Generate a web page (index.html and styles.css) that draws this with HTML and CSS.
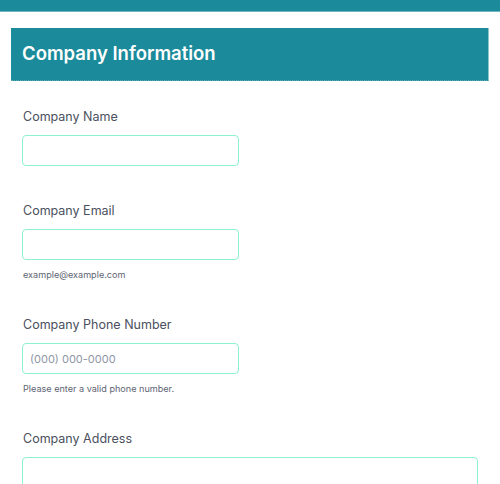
FILE: index.html
```html
<!DOCTYPE html>
<html lang="en">
<head>
    <meta charset="UTF-8">
    <meta name="viewport" content="width=device-width, initial-scale=1.0">
    <title>Company Information</title>
    <link rel="stylesheet" href="styles.css">
</head>
<body>
    <div class="top-bar"></div>

    <form class="form-card" id="companyForm">
        <div class="form-header">
            <h1>Company Information</h1>
        </div>

        <div class="field">
            <label for="companyName">Company Name</label>
            <input type="text" id="companyName" name="companyName" class="input-short">
        </div>

        <div class="field">
            <label for="companyEmail">Company Email</label>
            <input type="email" id="companyEmail" name="companyEmail" class="input-short">
            <span class="sublabel">example@example.com</span>
        </div>

        <div class="field">
            <label for="companyPhone">Company Phone Number</label>
            <input type="tel" id="companyPhone" name="companyPhone" class="input-short" placeholder="(000) 000-0000">
            <span class="sublabel">Please enter a valid phone number.</span>
        </div>

        <div class="field">
            <label for="companyAddress">Company Address</label>
            <input type="text" id="companyAddress" name="companyAddress" class="input-long">
        </div>
    </form>
</body>
</html>
```

FILE: styles.css
```css
body {
    margin: 0;
    font-family: Inter, "Noto Sans", sans-serif;
    background-color: #fff;
    color: #57647e;
}
.top-bar {
    height: 12px;
    background-color: #1b8a9b;
    border-bottom: 1px solid #6fb6c1;
    box-sizing: border-box;
}
.form-card {
    margin: 16px 11px 0;
}
.form-header {
    height: 53px;
    box-sizing: border-box;
    padding: 0 11px 3px;
    display: flex;
    align-items: center;
    background-color: #1b8a9b;
    border-right: 1px solid #8cc5ce;
    border-bottom: 1px dotted #5fa7b3;
}
.form-header h1 {
    margin: 0;
    font-size: 18.5px;
    font-weight: 600;
    color: #fff;
}
.field {
    padding: 26px 11px 9px 12px;
}
.field label {
    display: block;
    font-size: 12.5px;
    line-height: 20px;
    margin-bottom: 8px;
    color: #4a505e;
}
.field input {
    display: block;
    height: 31px;
    box-sizing: border-box;
    margin-left: -1px;
    padding: 0 7px;
    border: 1px solid #8ef0d2;
    border-radius: 4px;
    font-family: inherit;
    font-size: 11px;
    color: #2c3345;
    outline: none;
}
.field input::placeholder {
    color: #8f96a6;
}
.input-short {
    width: 217px;
}
.input-long {
    width: calc(100% + 1px);
}
.sublabel {
    display: block;
    margin: 7px 0 -3px;
    font-size: 9.1px;
    line-height: 16px;
    color: #5d6472;
}
```
